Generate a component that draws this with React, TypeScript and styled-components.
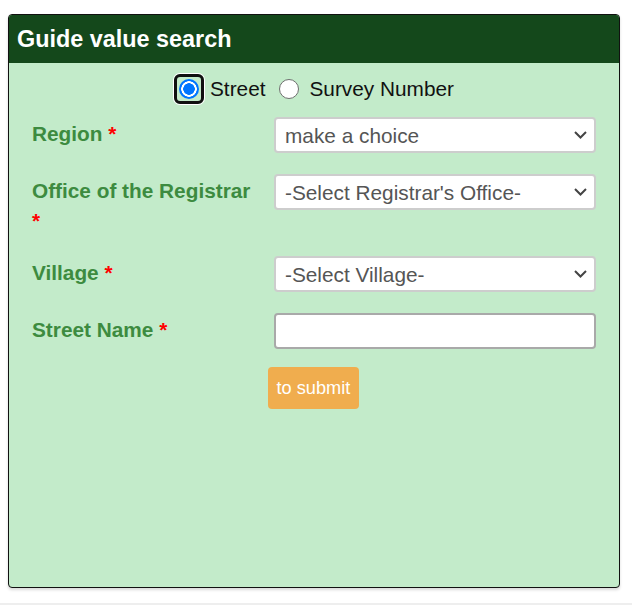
import React, { FC } from 'react';
import styled, { createGlobalStyle } from 'styled-components';

const GlobalStyle = createGlobalStyle`
    html, body {
        margin: 0;
        padding: 0;
        background: #ffffff;
        font-family: 'Liberation Sans', Arial, sans-serif;
    }
    * {
        box-sizing: border-box;
    }
`;

const Page = styled.div`
    padding: 14px 8px 0;
`;

const Card = styled.section`
    width: 612px;
    height: 574px;
    border: 1px solid #111;
    border-radius: 4px;
    overflow: hidden;
    background-color: #c3ebca;
    box-shadow: 0 2px 3px rgba(0, 0, 0, 0.15);
    display: flex;
    flex-direction: column;
`;

const Header = styled.h2`
    margin: 0;
    height: 48px;
    padding: 0 8px;
    display: flex;
    align-items: center;
    background-color: #14481b;
    color: #ffffff;
    font-size: 23.4px;
    font-weight: bold;
`;

const RadioRow = styled.div`
    margin-top: 11px;
    height: 30px;
    display: flex;
    justify-content: center;
    align-items: center;
    font-size: 20.8px;
    color: #111;
`;

const RadioOption = styled.label<{ spaced?: boolean }>`
    display: flex;
    align-items: center;
    margin-left: ${({ spaced }) => (spaced ? '13px' : '0')};
    line-height: 30px;
`;

const FocusRing = styled.span`
    display: inline-flex;
    padding: 2px;
    margin-right: 6px;
    border: 3px solid #101010;
    border-radius: 6px;
    box-shadow: 0 0 0 1px #ffffff;
`;

const RadioDot = styled.span<{ checked?: boolean }>`
    display: inline-block;
    width: 20px;
    height: 20px;
    border-radius: 50%;
    margin-right: ${({ checked }) => (checked ? '0' : '11px')};
    border: ${({ checked }) => (checked ? 'none' : '1px solid #6f6f6f')};
    background: ${({ checked }) =>
        checked
            ? 'radial-gradient(circle, #0075ff 0 5.5px, #ffffff 6px 7.5px, #0075ff 8px)'
            : '#ffffff'};
`;

const Form = styled.form`
    margin-top: 13px;
    padding: 0 23px;
    display: grid;
    grid-template-columns: 228px 322px;
    column-gap: 14px;
    row-gap: 21px;
`;

const Label = styled.label`
    align-self: start;
    padding-top: 2px;
    font-size: 20.8px;
    font-weight: bold;
    line-height: 1.428571;
    color: #3d8b40;
`;

const Required = styled.span`
    color: #ff0000;
`;

const SelectWrap = styled.div`
    position: relative;
    height: 36px;
`;

const Select = styled.select`
    appearance: none;
    width: 100%;
    height: 36px;
    padding: 0 30px 0 9px;
    border: 2px solid #cdcdcd;
    border-radius: 4px;
    background: #ffffff;
    color: #555555;
    font-family: 'Liberation Sans', Arial, sans-serif;
    font-size: 20.8px;
    outline: none;
`;

const Chevron = styled.svg`
    position: absolute;
    right: 9px;
    top: 50%;
    transform: translateY(-50%);
    pointer-events: none;
`;

const TextInput = styled.input`
    width: 100%;
    height: 36px;
    padding: 0 9px;
    border: 2px solid #a9a9a9;
    border-radius: 4px;
    background: #ffffff;
    font-family: 'Liberation Sans', Arial, sans-serif;
    font-size: 20.8px;
    outline: none;
`;

const Actions = styled.div`
    margin-top: 18px;
    padding-left: 259px;
`;

const SubmitButton = styled.button`
    height: 42px;
    padding: 0 8.5px;
    border: none;
    border-radius: 4px;
    background-color: #f0ad4e;
    color: #ffffff;
    font-family: 'Liberation Sans', Arial, sans-serif;
    font-size: 18.2px;
    cursor: pointer;
`;

const Footer = styled.div`
    margin-top: 15px;
    height: 20px;
    background-color: #eeeeee;
`;

interface DropdownProps {
    placeholder: string;
}

const Dropdown: FC<DropdownProps> = ({ placeholder }) => (
    <SelectWrap>
        <Select defaultValue="">
            <option value="">{placeholder}</option>
        </Select>
        <Chevron width="13" height="8" viewBox="0 0 13 8">
            <polyline points="1,1 6.5,6.5 12,1" fill="none" stroke="#444" strokeWidth="2" />
        </Chevron>
    </SelectWrap>
);

const App: FC = () => {
    return (
        <>
            <GlobalStyle />
            <Page>
                <Card>
                    <Header>Guide value search</Header>
                    <RadioRow>
                        <RadioOption>
                            <FocusRing>
                                <RadioDot checked />
                            </FocusRing>
                            Street
                        </RadioOption>
                        <RadioOption spaced>
                            <RadioDot />
                            Survey Number
                        </RadioOption>
                    </RadioRow>
                    <Form onSubmit={(e) => e.preventDefault()}>
                        <Label>
                            Region <Required>*</Required>
                        </Label>
                        <Dropdown placeholder="make a choice" />

                        <Label>
                            Office of the Registrar <Required>*</Required>
                        </Label>
                        <Dropdown placeholder="-Select Registrar's Office-" />

                        <Label>
                            Village <Required>*</Required>
                        </Label>
                        <Dropdown placeholder="-Select Village-" />

                        <Label>
                            Street Name <Required>*</Required>
                        </Label>
                        <TextInput type="text" />
                    </Form>
                    <Actions>
                        <SubmitButton type="button">to submit</SubmitButton>
                    </Actions>
                </Card>
            </Page>
            <Footer />
        </>
    );
};

export default App;
